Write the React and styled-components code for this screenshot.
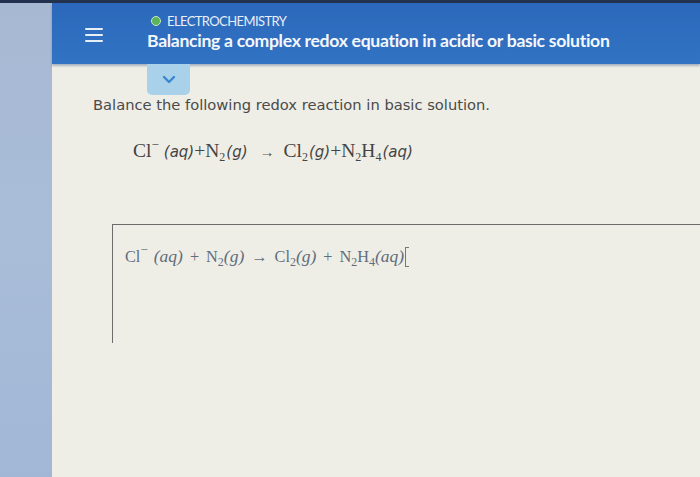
import styled, { createGlobalStyle } from "styled-components";

const Global = createGlobalStyle`
  html, body {
    margin: 0;
    padding: 0;
    width: 700px;
    height: 477px;
    overflow: hidden;
    background: #efeee6;
  }
  * { box-sizing: border-box; }
`;

const Screen = styled.div`
  width: 700px;
  height: 477px;
  display: flex;
  flex-direction: column;
  background: #efeee6;
`;

const TopEdge = styled.div`
  height: 3px;
  background: #22314d;
`;

const Body = styled.div`
  flex: 1;
  display: flex;
`;

const Sidebar = styled.div`
  width: 52px;
  background: linear-gradient(180deg, #a7b8d2 0%, #a9bdd9 50%, #a2b7d6 100%);
`;

const Main = styled.div`
  flex: 1;
  display: flex;
  flex-direction: column;
`;

const Header = styled.div`
  height: 61px;
  background: linear-gradient(180deg, #2b68bb 0%, #3273c3 100%);
  display: flex;
  align-items: center;
  padding-left: 33px;
  box-shadow: 0 2px 2px rgba(40, 70, 120, 0.35);
`;

const Menu = styled.div`
  width: 18px;
  display: flex;
  flex-direction: column;
  gap: 4px;
  margin-top: 2px;
  span {
    height: 2px;
    background: #e6eef8;
    border-radius: 1px;
  }
`;

const Titles = styled.div`
  margin-left: 44px;
  display: flex;
  flex-direction: column;
  gap: 1px;
  margin-top: -3px;
`;

const Topic = styled.div`
  display: flex;
  align-items: center;
  gap: 6px;
  font-family: Lato, "Liberation Sans", sans-serif;
  font-size: 13px;
  letter-spacing: -0.6px;
  color: #e8eef8;
  margin-left: 4px;
`;

const Dot = styled.span`
  width: 10px;
  height: 10px;
  border-radius: 50%;
  background: #5bb35a;
  border: 1.5px solid #c9e8c4;
`;

const Title = styled.div`
  font-family: Lato, "Liberation Sans", sans-serif;
  font-weight: 700;
  font-size: 17.6px;
  letter-spacing: -0.3px;
  color: #f4f7fc;
`;

const Content = styled.div`
  flex: 1;
  display: flex;
  flex-direction: column;
`;

const Tab = styled.div`
  margin-left: 95px;
  width: 43px;
  height: 31px;
  background: #a9d2ea;
  border-radius: 0 0 5px 5px;
  display: flex;
  align-items: center;
  justify-content: center;
`;

const Prompt = styled.p`
  margin: 0 0 0 41px;
  font-family: "DejaVu Sans", Verdana, sans-serif;
  font-size: 14.7px;
  color: #4a4a4a;
  line-height: 20px;
`;

const Equation = styled.div`
  margin: 24px 0 0 81px;
  font-family: "Liberation Serif", serif;
  font-size: 19.5px;
  color: #444;
  line-height: 24px;
  white-space: nowrap;
`;

const State = styled.span`
  font-family: "DejaVu Sans", sans-serif;
  font-style: italic;
  font-size: 15px;
  margin-left: ${(p) => (p.$gap ? "5px" : "1px")};
`;

const Sub = styled.span`
  font-size: 12px;
  position: relative;
  top: 4px;
`;

const Sup = styled.span`
  font-size: 13px;
  position: relative;
  top: -8px;
  margin-left: 0;
`;

const Arrow = styled.span`
  font-size: 15px;
  margin: 0 9px 0 12px;
  color: #555;
`;

const AnswerBox = styled.div`
  margin: 59px 0 0 60px;
  height: 119px;
  border-top: 1.5px solid #6c6c6a;
  border-left: 1.5px solid #6c6c6a;
  padding: 21px 0 0 12px;
`;

const Answer = styled.div`
  font-family: "Liberation Serif", serif;
  font-size: 16.3px;
  color: #5f6d7c;
  line-height: 20px;
  white-space: nowrap;
`;

const Ital = styled.span`
  font-style: italic;
  font-size: 17.5px;
  margin-left: ${(p) => (p.$gap ? "6px" : "0")};
`;

const Op = styled.span`
  margin: 0 7px;
`;

const Caret = styled.span`
  display: inline-block;
  width: 4px;
  height: 20px;
  border: 1px solid #777;
  border-right: none;
  margin-left: 1px;
  vertical-align: -5px;
`;

export default function App() {
  return (
    <Screen>
      <Global />
      <TopEdge />
      <Body>
        <Sidebar />
        <Main>
          <Header>
            <Menu>
              <span />
              <span />
              <span />
            </Menu>
            <Titles>
              <Topic>
                <Dot />
                ELECTROCHEMISTRY
              </Topic>
              <Title>Balancing a complex redox equation in acidic or basic solution</Title>
            </Titles>
          </Header>
          <Content>
            <Tab>
              <svg width="14" height="9" viewBox="0 0 14 9">
                <path d="M2 2 L7 7 L12 2" fill="none" stroke="#3a87cf" strokeWidth="2.4" strokeLinecap="round" strokeLinejoin="round" />
              </svg>
            </Tab>
            <Prompt>Balance the following redox reaction in basic solution.</Prompt>
            <Equation>
              Cl<Sup>−</Sup>
              <State $gap>(aq)</State>+N<Sub>2</Sub>
              <State>(g)</State>
              <Arrow>→</Arrow>
              Cl<Sub>2</Sub>
              <State>(g)</State>+N<Sub>2</Sub>H<Sub>4</Sub>
              <State>(aq)</State>
            </Equation>
            <AnswerBox>
              <Answer>
                Cl<Sup>−</Sup>
                <Ital $gap>(aq)</Ital>
                <Op>+</Op>N<Sub>2</Sub>
                <Ital>(g)</Ital>
                <Op>→</Op>Cl<Sub>2</Sub>
                <Ital>(g)</Ital>
                <Op>+</Op>N<Sub>2</Sub>H<Sub>4</Sub>
                <Ital>(aq)</Ital>
                <Caret />
              </Answer>
            </AnswerBox>
          </Content>
        </Main>
      </Body>
    </Screen>
  );
}
